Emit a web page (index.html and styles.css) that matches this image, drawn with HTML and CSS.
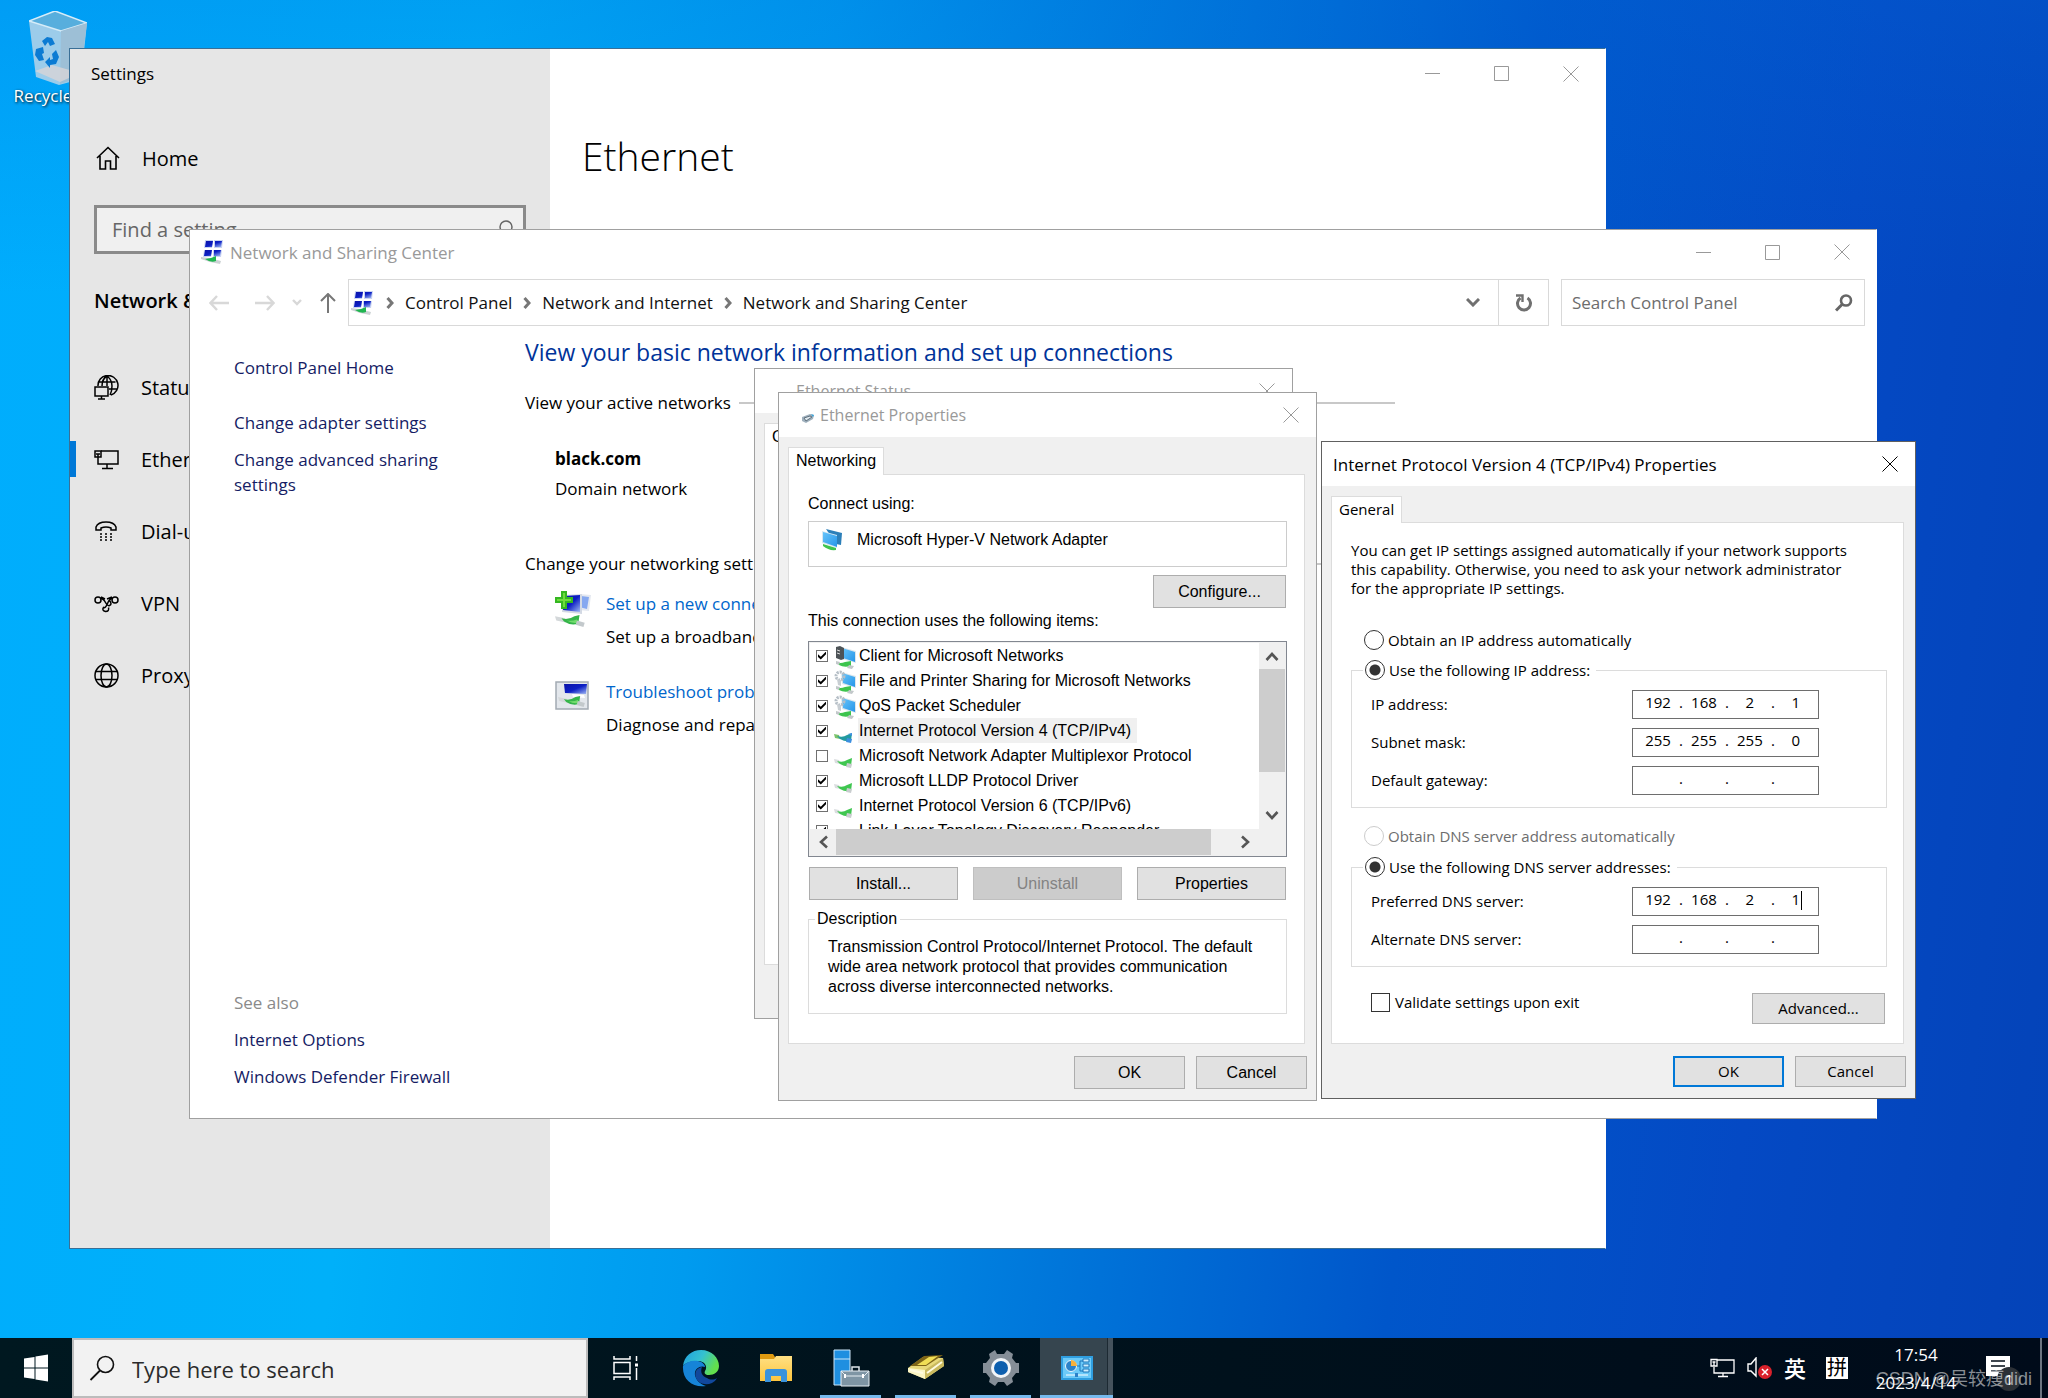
FILE: index.html
```html
<!DOCTYPE html>
<html lang="en">

<head>
    <meta charset="UTF-8" />
    <meta name="viewport" content="width=device-width, initial-scale=1.0"/>
    <title>Desktop</title>

    <link rel="stylesheet" href="styles.css">
</head>

<body>

    <!-- shared icons -->
    <svg class="defs" width="0" height="0" aria-hidden="true">
        <defs>
            <linearGradient id="gScreen" x1="0" y1="0" x2="1" y2="1">
                <stop offset="0" stop-color="#0a12a8"/>
                <stop offset="0.5" stop-color="#0c1fc4"/>
                <stop offset="1" stop-color="#9fb8f4"/>
            </linearGradient>
            <linearGradient id="gGlass" x1="0" y1="0" x2="1" y2="1">
                <stop offset="0" stop-color="#66c4fb"/>
                <stop offset="1" stop-color="#2796e8"/>
            </linearGradient>
            <linearGradient id="gEdge" x1="0" y1="0" x2="1" y2="0.4">
                <stop offset="0" stop-color="#1f9fe0"/>
                <stop offset="0.55" stop-color="#35c1d0"/>
                <stop offset="1" stop-color="#63e04c"/>
            </linearGradient>
            <linearGradient id="gFolder" x1="0" y1="0" x2="0" y2="1">
                <stop offset="0" stop-color="#ffe084"/>
                <stop offset="1" stop-color="#fdc53e"/>
            </linearGradient>
        </defs>
        <symbol id="minimize" viewBox="0 0 15 15"><path d="M0 7.500h15" stroke="currentColor"/></symbol>
        <symbol id="maximize" viewBox="0 0 15 15"><path d="M.5.5h14v14H.5z" fill="none" stroke="currentColor"/></symbol>
        <symbol id="close" viewBox="0 0 16 16"><path d="M.5.5l15 15M15.5.5l-15 15" stroke="currentColor"/></symbol>
        <symbol id="chevron" viewBox="0 0 8 12"><path d="M1.500 1l4.500 5-4.500 5" fill="none" stroke="currentColor" stroke-width="3"/></symbol>
        <symbol id="plug" viewBox="0 0 24 12">
            <path d="M0 2l8 2 1 4-8-2z" fill="#d4d8da"/>
            <path d="M5 4q5 2 10-2l4-1-1 8q-6 2-11-2z" fill="#35b54a"/>
            <path d="M9 6q4 1 8-1l1 3q-5 1-9-2z" fill="#72dc6c"/>
            <path d="M17 6l6 2-1 4-6-2z" fill="#c3c9cc"/>
        </symbol>
        <symbol id="netcenter" viewBox="0 0 24 24">
            <path d="M4 0h8L11 8H3zM13 0h9l-1 8h-8z" fill="#c9d4f2"/>
            <path d="M5 1h7l-1 6H4zM14 1h7l-1 6h-6z" fill="url(#gScreen)"/>
            <path d="M3 10h8l-1 7H2zM12 10h9l-1 7h-8z" fill="#c9d4f2"/>
            <path d="M4 10h7l-1 6H3zM13 10h7l-1 6h-6z" fill="url(#gScreen)"/>
            <path d="M0 17l8 1 12 3-1 3-10-2-9-3z" fill="#ccd2d4"/>
            <path d="M4 19l6-1 5-2v5q-5 2-11-2z" fill="#20b550"/>
        </symbol>
        <symbol id="netitem" viewBox="0 0 24 24">
            <path d="M7 2l15 4v12L8 14z" fill="#dce6ec"/>
            <path d="M8 3l13 4v10L9 13z" fill="url(#gGlass)"/>
            <path d="M3 17q3 2 8 0l6-1v5q-7 2-12-1z" fill="#3dc44e"/>
            <path d="M2 16l4 1-1 3-3-1zM15 20l5 1-2 3-5-1z" fill="#c2c8ca"/>
        </symbol>
        <symbol id="plugitem" viewBox="0 0 24 24">
            <path d="M0 14l5 1 1 4-5-1z" fill="#dadddf"/>
            <path d="M3 16q6 2 10-1l5-2-1 8q-6 1-11-2z" fill="#3fc650"/>
            <path d="M13 18l5 1-1 4-5-1z" fill="#c9cdcf"/>
        </symbol>
    </svg>

    <main class="desktop">

        <a class="desktop-icon" href="#">
            <svg width="58" height="74" viewBox="0 0 58 74">
                <path d="M0 10L26 0l32 12-6 56-22 6L7 66z" fill="#b7d4e8" opacity=".85"/>
                <path d="M0 10L26 0l32 12-26 8z" fill="#57aedd" stroke="#d6ecf8" stroke-width="1.500"/>
                <path d="M32 20l26-8-7 54-20 7z" fill="#9dbfd6"/>
                <path d="M6 60l17-6 28 8-20 9z" fill="#d8d5d7" opacity=".8"/>
                <path d="M13 30l5-4 5 1 3 6-5 2-2-4-3 4zM7 38l7-2 1 6-2 1 2 6-5 1-4-6zM27 39l3 7-3 7-6 1v3l-5-6 5-5v3l3-1-1-5z" fill="#0b7bd3"/>
            </svg>
            <span>Recycle Bin</span>
        </a>

        <!-- Settings -->
        <section class="window settings">
            <nav class="settings-nav">
                <div class="settings-title">Settings</div>
                <a class="settings-link home" href="#">
                    <svg width="24" height="24" viewBox="0 0 24 24"><path d="M1 12L12 1.500 23 12M4 10v13h5.500v-8h5v8H20V10" fill="none" stroke="#000" stroke-width="1.600"/></svg>
                    Home
                </a>
                <div class="settings-search">
                    <input type="text" placeholder="Find a setting" aria-label="Find a setting">
                    <svg width="20" height="20" viewBox="0 0 20 20"><circle cx="12" cy="7" r="6" fill="none" stroke="#666" stroke-width="1.500"/><path d="M8 12l-7 7" stroke="#666" stroke-width="1.500"/></svg>
                </div>
                <h2>Network &amp; Internet</h2>
                <a class="settings-link" href="#">
                    <svg width="25" height="25" viewBox="0 0 25 25" fill="none" stroke="#000" stroke-width="1.500"><path d="M4 11a10 10 0 1 1 13 9M8 11q0-7 5-10 5 4 5 10 0 5-2 9M4.500 7h17M15 14h8M13 1v10"/><path d="M1 12h13v9H1zM7.500 21v3M4 24h7"/></svg>
                    Status
                </a>
                <a class="settings-link active" href="#">
                    <svg width="25" height="25" viewBox="0 0 25 25" fill="none" stroke="#000" stroke-width="1.500"><path d="M7 4h17v13H4v-7M13 17v4M8 21.500h11"/><path d="M1 4h6v6H1zM2 7h4M4 7v3"/></svg>
                    Ethernet
                </a>
                <a class="settings-link" href="#">
                    <svg width="25" height="25" viewBox="0 0 25 25" fill="none" stroke="#000" stroke-width="1.500"><path d="M2 8q2-5 10-5t10 5v3h-5V9q-5-2-10 0v2H2z"/><path d="M6 15h2M11 15h2M16 15h2M6 18h2M11 18h2M16 18h2M6 21h2M11 21h2M16 21h2"/></svg>
                    Dial-up
                </a>
                <a class="settings-link" href="#">
                    <svg width="25" height="25" viewBox="0 0 25 25" fill="none" stroke="#000" stroke-width="1.500"><circle cx="4" cy="9" r="3"/><circle cx="21" cy="9" r="3"/><path d="M6.500 7.500q3 0 5 4t4 3q3-1 0-5M18.500 7.500q-3 0-5 5t-4 4q-2 3 2 4 4 0 3-4M7 6l4 2M18 6l-5 2"/></svg>
                    VPN
                </a>
                <a class="settings-link" href="#">
                    <svg width="25" height="25" viewBox="0 0 25 25" fill="none" stroke="#000" stroke-width="1.500"><circle cx="12.500" cy="12.500" r="11.500"/><ellipse cx="12.500" cy="12.500" rx="5.500" ry="11.500"/><path d="M2 8.500h21M2 16.500h21"/></svg>
                    Proxy
                </a>
            </nav>
            <div class="settings-main">
                <div class="captions">
                    <button aria-label="Minimize"><svg width="15" height="15"><use href="#minimize"/></svg></button>
                    <button aria-label="Maximize"><svg width="15" height="15"><use href="#maximize"/></svg></button>
                    <button aria-label="Close"><svg width="16" height="16"><use href="#close"/></svg></button>
                </div>
                <h1>Ethernet</h1>
            </div>
        </section>

        <!-- Network and Sharing Center -->
        <section class="window explorer">
            <header class="explorer-title">
                <svg width="24" height="24"><use href="#netcenter"/></svg>
                <span>Network and Sharing Center</span>
                <div class="captions">
                    <button aria-label="Minimize"><svg width="15" height="15"><use href="#minimize"/></svg></button>
                    <button aria-label="Maximize"><svg width="15" height="15"><use href="#maximize"/></svg></button>
                    <button aria-label="Close"><svg width="16" height="16"><use href="#close"/></svg></button>
                </div>
            </header>
            <div class="toolbar">
                <div class="history">
                    <button aria-label="Back" disabled><svg width="20" height="16" viewBox="0 0 20 16"><path d="M8 1L1.500 8 8 15M2 8h18" fill="none" stroke="currentColor" stroke-width="2.400"/></svg></button>
                    <button class="forward" aria-label="Forward" disabled><svg width="20" height="16" viewBox="0 0 20 16"><path d="M12 1l6.500 7-6.500 7M18 8H0" fill="none" stroke="currentColor" stroke-width="2.400"/></svg></button>
                    <button aria-label="Recent" disabled><svg width="10" height="7" viewBox="0 0 10 7"><path d="M1 1l4 4 4-4" fill="none" stroke="currentColor" stroke-width="2.400"/></svg></button>
                    <button class="up" aria-label="Up"><svg width="16" height="20" viewBox="0 0 16 20"><path d="M1 8l7-7 7 7M8 1.500V20" fill="none" stroke="currentColor" stroke-width="2"/></svg></button>
                </div>
                <div class="address">
                    <svg width="24" height="24"><use href="#netcenter"/></svg>
                    <svg class="sep" width="8" height="12"><use href="#chevron"/></svg>
                    <a href="#">Control Panel</a>
                    <svg class="sep" width="8" height="12"><use href="#chevron"/></svg>
                    <a href="#">Network and Internet</a>
                    <svg class="sep" width="8" height="12"><use href="#chevron"/></svg>
                    <a href="#">Network and Sharing Center</a>
                    <button class="drop" aria-label="Previous locations"><svg width="14" height="9" viewBox="0 0 14 9"><path d="M1 1l6 6 6-6" fill="none" stroke="currentColor" stroke-width="3"/></svg></button>
                    <button class="refresh" aria-label="Refresh"><svg width="18" height="18" viewBox="0 0 18 18"><path d="M12.500 4a6.500 6.500 0 1 1-7 0" fill="none" stroke="currentColor" stroke-width="3"/><path d="M1 1.500h6.500V8" fill="none" stroke="currentColor" stroke-width="2.400"/></svg></button>
                </div>
                <div class="panel-search">
                    <input type="text" placeholder="Search Control Panel" aria-label="Search Control Panel">
                    <svg width="18" height="18" viewBox="0 0 18 18"><circle cx="11" cy="6.500" r="5" fill="none" stroke="#666" stroke-width="2.600"/><path d="M7.500 10L1 16.500" stroke="#666" stroke-width="3"/></svg>
                </div>
            </div>
            <div class="explorer-body">
                <nav class="tasks">
                    <a class="panel-home" href="#">Control Panel Home</a>
                    <a href="#">Change adapter settings</a>
                    <a href="#">Change advanced sharing settings</a>
                    <span class="see-also">See also</span>
                    <a href="#">Internet Options</a>
                    <a href="#">Windows Defender Firewall</a>
                </nav>
                <div class="network-info">
                    <h1>View your basic network information and set up connections</h1>
                    <h2>View your active networks</h2>
                    <div class="active-network">
                        <strong>black.com</strong>
                        <span>Domain network</span>
                    </div>
                    <h2>Change your networking settings</h2>
                    <div class="action">
                        <svg width="36" height="36" viewBox="0 0 36 36">
                            <path d="M24 3l12 1-2 16-11-1z" fill="#e4e8f0"/><path d="M26 5l8 1-2 12-8-2z" fill="#86a8f0"/>
                            <path d="M8 4l19-1v20L7 21z" fill="#d3d9e4"/><path d="M9 5l16-1v17L8 19z" fill="url(#gScreen)"/>
                            <path d="M6 0h6v6h6v6h-6v6H6v-6H0V6h6z" fill="#35b721"/><path d="M8 2h2v6h6v2h-6v6H8v-6H2V8h6z" fill="#6fdc3e"/>
                            <svg x="0" y="23" width="31" height="13" viewBox="0 0 24 12" preserveAspectRatio="none"><use href="#plug" width="24" height="12"/></svg>
                        </svg>
                        <div>
                            <a href="#">Set up a new connection or network</a>
                            <p>Set up a broadband, dial-up, or VPN connection</p>
                        </div>
                    </div>
                    <div class="action">
                        <svg width="36" height="36" viewBox="0 0 36 36">
                            <path d="M1 3h32v27H1z" fill="#e3e7ec" stroke="#a3aab3" stroke-width="1.500"/>
                            <path d="M9 5h23l-1 10-21-1z" fill="url(#gScreen)"/>
                            <path d="M17 15l12 1 1 3-12-1z" fill="#fff"/>
                            <svg x="3" y="16" width="28" height="12" viewBox="0 0 24 12" preserveAspectRatio="none"><use href="#plug" width="24" height="12"/></svg>
                        </svg>
                        <div>
                            <a href="#">Troubleshoot problems</a>
                            <p>Diagnose and repair network problems</p>
                        </div>
                    </div>
                </div>
            </div>
        </section>

        <!-- Ethernet Status -->
        <section class="window dialog status">
            <header class="dialog-title">
                <svg width="14" height="11" viewBox="0 0 14 11"><path d="M1 8l8-4 4 2-8 5z" fill="#7d8c98"/></svg>
                <span>Ethernet Status</span>
                <button aria-label="Close"><svg width="16" height="16"><use href="#close"/></svg></button>
            </header>
            <div class="tabs"><button class="tab">General</button></div>
            <div class="page"></div>
        </section>

        <!-- Ethernet Properties -->
        <section class="window dialog properties">
            <header class="dialog-title">
                <svg width="14" height="11" viewBox="0 0 14 11"><path d="M1 4l8-3 4 1-1 4-7 4-4-2z" fill="#9fb0bd"/><path d="M3 5l6-2 2 1-6 4z" fill="#dfe9ef" stroke="#60707c"/><path d="M10 1l3 1-1 2z" fill="#38a5dd"/></svg>
                <span>Ethernet Properties</span>
                <button aria-label="Close"><svg width="16" height="16"><use href="#close"/></svg></button>
            </header>
            <div class="tabs"><button class="tab">Networking</button></div>
            <div class="page">
                <p>Connect using:</p>
                <div class="adapter">
                    <svg width="22" height="22" viewBox="0 0 22 22"><path d="M5 0l16 4-1 12-5-1z" fill="#2b7fb9"/><path d="M1 2l15 4v13L1 14z" fill="#d6e8f2"/><path d="M2 3l14 4v11L2 13z" fill="url(#gGlass)"/><path d="M2 15l13 4v2q-7 1-13-4z" fill="#3fc44f"/></svg>
                    Microsoft Hyper-V Network Adapter
                </div>
                <button class="btn configure">Configure...</button>
                <p>This connection uses the following items:</p>
                <div class="listbox">
                    <ul>
                        <li>
                            <input type="checkbox" id="item1" checked>
                            <svg width="24" height="24"><use href="#netitem"/><path d="M2 2l4-1 4 2v11l-3 1-5-2z" fill="#4d5357"/><path d="M3 5l3 1M3 8l3 1" stroke="#ddd"/></svg>
                            <label for="item1">Client for Microsoft Networks</label>
                        </li>
                        <li>
                            <input type="checkbox" id="item2" checked>
                            <svg width="24" height="24"><use href="#netitem"/><circle cx="6" cy="6" r="4" fill="none" stroke="#b5bec6" stroke-width="3" stroke-dasharray="2 1"/><path d="M3 9l4 1v6l-3-1z" fill="#c8ced3"/></svg>
                            <label for="item2">File and Printer Sharing for Microsoft Networks</label>
                        </li>
                        <li>
                            <input type="checkbox" id="item3" checked>
                            <svg width="24" height="24"><use href="#netitem"/><circle cx="6" cy="6" r="4" fill="none" stroke="#b5bec6" stroke-width="3" stroke-dasharray="2 1"/><path d="M3 9l4 1v6l-3-1z" fill="#c8ced3"/></svg>
                            <label for="item3">QoS Packet Scheduler</label>
                        </li>
                        <li class="selected">
                            <input type="checkbox" id="item4" checked>
                            <svg width="24" height="24" viewBox="0 0 24 24"><path d="M0 14l5 1 1 4-5-1z" fill="#7cc36a"/><path d="M3 16q6 2 10-1l5-2-1 8q-6 1-11-2z" fill="#239aa0"/><path d="M13 18l5 1-1 4-5-1zM14 14l4-1v3z" fill="#3d8fe0"/></svg>
                            <label for="item4">Internet Protocol Version 4 (TCP/IPv4)</label>
                        </li>
                        <li>
                            <input type="checkbox" id="item5">
                            <svg width="24" height="24"><use href="#plugitem"/></svg>
                            <label for="item5">Microsoft Network Adapter Multiplexor Protocol</label>
                        </li>
                        <li>
                            <input type="checkbox" id="item6" checked>
                            <svg width="24" height="24"><use href="#plugitem"/></svg>
                            <label for="item6">Microsoft LLDP Protocol Driver</label>
                        </li>
                        <li>
                            <input type="checkbox" id="item7" checked>
                            <svg width="24" height="24"><use href="#plugitem"/></svg>
                            <label for="item7">Internet Protocol Version 6 (TCP/IPv6)</label>
                        </li>
                        <li>
                            <input type="checkbox" id="item8" checked>
                            <svg width="24" height="24"><use href="#plugitem"/></svg>
                            <label for="item8">Link-Layer Topology Discovery Responder</label>
                        </li>
                    </ul>
                    <div class="scroll-v">
                        <button aria-label="Scroll up"><svg width="14" height="10" viewBox="0 0 14 10"><path d="M1.500 9L7 3l5.500 6" fill="none" stroke="#555" stroke-width="2.600"/></svg></button>
                        <div class="thumb"></div>
                        <button aria-label="Scroll down"><svg width="14" height="10" viewBox="0 0 14 10"><path d="M1.500 1L7 7l5.500-6" fill="none" stroke="#555" stroke-width="2.600"/></svg></button>
                    </div>
                    <div class="scroll-h">
                        <button aria-label="Scroll left"><svg width="10" height="14" viewBox="0 0 10 14"><path d="M9 1.500L3 7l6 5.500" fill="none" stroke="#555" stroke-width="2.600"/></svg></button>
                        <div class="thumb"></div>
                        <button aria-label="Scroll right"><svg width="10" height="14" viewBox="0 0 10 14"><path d="M1 1.500L7 7l-6 5.500" fill="none" stroke="#555" stroke-width="2.600"/></svg></button>
                    </div>
                </div>
                <div class="item-buttons">
                    <button class="btn">Install...</button>
                    <button class="btn" disabled>Uninstall</button>
                    <button class="btn">Properties</button>
                </div>
                <fieldset class="description">
                    <legend>Description</legend>
                    <p>Transmission Control Protocol/Internet Protocol. The default wide area network protocol that provides communication across diverse interconnected networks.</p>
                </fieldset>
            </div>
            <footer>
                <button class="btn">OK</button>
                <button class="btn">Cancel</button>
            </footer>
        </section>

        <!-- IPv4 Properties -->
        <section class="window dialog ipv4">
            <header class="dialog-title">
                <span>Internet Protocol Version 4 (TCP/IPv4) Properties</span>
                <button aria-label="Close"><svg width="16" height="16"><use href="#close"/></svg></button>
            </header>
            <div class="tabs"><button class="tab">General</button></div>
            <div class="page">
                <p class="intro">You can get IP settings assigned automatically if your network supports this capability. Otherwise, you need to ask your network administrator for the appropriate IP settings.</p>
                <label class="radio"><input type="radio" name="ip"> Obtain an IP address automatically</label>
                <fieldset>
                    <legend><label class="radio"><input type="radio" name="ip" checked> Use the following IP address:</label></legend>
                    <div class="field">
                        <label for="ip">IP address:</label>
                        <div class="octets"><input id="ip" value="192">.<input aria-label="IP octet 2" value="168">.<input aria-label="IP octet 3" value="2">.<input aria-label="IP octet 4" value="1"></div>
                    </div>
                    <div class="field">
                        <label for="mask">Subnet mask:</label>
                        <div class="octets"><input id="mask" value="255">.<input aria-label="Mask octet 2" value="255">.<input aria-label="Mask octet 3" value="255">.<input aria-label="Mask octet 4" value="0"></div>
                    </div>
                    <div class="field">
                        <label for="gateway">Default gateway:</label>
                        <div class="octets"><input id="gateway">.<input aria-label="Gateway octet 2">.<input aria-label="Gateway octet 3">.<input aria-label="Gateway octet 4"></div>
                    </div>
                </fieldset>
                <label class="radio dns-auto"><input type="radio" name="dns" disabled> Obtain DNS server address automatically</label>
                <fieldset>
                    <legend><label class="radio"><input type="radio" name="dns" checked> Use the following DNS server addresses:</label></legend>
                    <div class="field">
                        <label for="dns1">Preferred DNS server:</label>
                        <div class="octets focused"><input id="dns1" value="192">.<input aria-label="DNS octet 2" value="168">.<input aria-label="DNS octet 3" value="2">.<input aria-label="DNS octet 4" value="1"></div>
                    </div>
                    <div class="field">
                        <label for="dns2">Alternate DNS server:</label>
                        <div class="octets"><input id="dns2">.<input aria-label="Alternate DNS octet 2">.<input aria-label="Alternate DNS octet 3">.<input aria-label="Alternate DNS octet 4"></div>
                    </div>
                </fieldset>
                <div class="validate">
                    <label><input type="checkbox"> Validate settings upon exit</label>
                    <button class="btn">Advanced...</button>
                </div>
            </div>
            <footer>
                <button class="btn default">OK</button>
                <button class="btn">Cancel</button>
            </footer>
        </section>
    </main>

    <footer class="taskbar">
        <button class="start" aria-label="Start">
            <svg width="24" height="28" viewBox="0 0 24 28"><path d="M0 4.500l10.500-1.500v10.500H0zM11.500 2.500L24 .5v13H11.500zM0 14.500h10.500V25L0 23.500zM11.500 14.500H24v13l-12.500-2z" fill="#fff"/></svg>
        </button>
        <div class="taskbar-search">
            <svg width="26" height="26" viewBox="0 0 26 26"><circle cx="16.500" cy="9.500" r="8" fill="none" stroke="#111" stroke-width="1.600"/><path d="M11 15.500L1.500 25" stroke="#111" stroke-width="1.800"/></svg>
            <input type="text" placeholder="Type here to search" aria-label="Type here to search">
        </div>
        <button class="app" aria-label="Task View">
            <svg width="26" height="26" viewBox="0 0 26 26" fill="none" stroke="#fff" stroke-width="1.500"><path d="M1 1v3h16V1M1 25v-3h16v3M1 7.500h16v11H1zM23.500 1v5M23.500 13v12"/><path d="M22 8.500h3v3h-3z" fill="#fff" stroke="none"/></svg>
        </button>
        <button class="app" aria-label="Microsoft Edge">
            <svg width="38" height="38" viewBox="0 0 38 38">
                <path d="M1 17C2 7 10 1 19 1c11 0 18 8 18 16 0 6-5 9-10 9-4 0-5-2-4-4 3-4 0-10-7-10C9 12 3 14 1 17z" fill="url(#gEdge)"/>
                <path d="M1 17c3-4 9-6 15-5 5 1 7 4 7 6-5-2-11 2-10 8 1 5 5 9 11 11C11 39 0 31 1 17z" fill="#1684d8"/>
                <path d="M20 18c-6 1-8 6-6 11s9 8 16 5c2-1 4-3 5-5-3 2-7 2-10 0-5-2-7-6-5-11z" fill="#11489c"/>
            </svg>
        </button>
        <button class="app" aria-label="File Explorer">
            <svg width="34" height="30" viewBox="0 0 34 30">
                <path d="M1 1h13l2 3v6H1z" fill="#df9a10"/><path d="M1 6h14l2-3h16v25H1z" fill="url(#gFolder)"/>
                <path d="M6 29V19q0-3 3-3h16q3 0 3 3v10h-6v-6H12v6z" fill="#3b93dc"/>
            </svg>
        </button>
        <button class="app running" aria-label="Server Manager">
            <svg width="38" height="38" viewBox="0 0 38 38">
                <path d="M2 1h16v35H2z" fill="#1f8fe0" stroke="#cde6f8"/><path d="M2 10h16" stroke="#cde6f8"/>
                <path d="M20 22V18h7v4" fill="none" stroke="#dfe6ea" stroke-width="1.500"/>
                <path d="M9 22h28v15H9z" fill="#7e95a4" stroke="#e5edf2"/><path d="M9 22l5 5h18l5-5" fill="none" stroke="#e5edf2"/><path d="M13 25v4M31 25v4" stroke="#fff" stroke-width="2"/>
            </svg>
        </button>
        <button class="app running" aria-label="Network">
            <svg width="38" height="28" viewBox="0 0 38 28">
                <path d="M1 14L16 3l20 1 1 8-19 13L1 18z" fill="#e8d97a"/><path d="M3 12L17 2l19-1-17 11z" fill="#7d6417"/>
                <path d="M10 11L22 3l9-1-12 9z" fill="#f0de55"/><path d="M1 14l17 2v9L1 18z" fill="#fbf5c4"/><path d="M18 16L36 4l1 8-19 13z" fill="#c9b95e"/><path d="M3 16l13 3M20 19l15-11" stroke="#fffbe0" stroke-width="2"/>
            </svg>
        </button>
        <button class="app running" aria-label="Settings">
            <svg width="38" height="38" viewBox="0 0 38 38">
                <path d="M15 5l-2-4-6 4 1 4-4 5-3 0v10l3 0 4 5-1 4 6 4 3-4h6l3 4 6-4-1-4 4-5 3 0V14l-3 0-4-5 1-4-6-4-3 4z" fill="#858e97"/>
                <ellipse cx="19" cy="19" rx="10" ry="10" fill="#f2f5f8"/><circle cx="19" cy="19" r="7" fill="#0d5fae"/>
            </svg>
        </button>
        <button class="app current" aria-label="Control Panel">
            <svg width="32" height="24" viewBox="0 0 32 24">
                <path d="M1 1h30v22H1z" fill="#6ccaf8" stroke="#2f9ee0" stroke-width="2"/>
                <circle cx="10" cy="10" r="5.500" fill="#2c82c9" stroke="#eaf6fd"/><path d="M10 10V4a6 6 0 0 1 6 6z" fill="#f7b13c"/>
                <path d="M16 10h3V5h3M19 10v5h3" fill="none" stroke="#1d76ba"/><path d="M22 3h6v3h-6zM22 8h6v3h-6zM22 13h6v3h-6z" fill="#cdeefe" stroke="#1d76ba"/>
                <path d="M5 19h22" stroke="#fff"/><path d="M14 17h3v4h-3z" fill="#2c82c9"/>
            </svg>
        </button>
        <div class="tray">
            <svg width="25" height="20" viewBox="0 0 25 20" fill="none" stroke="#fff" stroke-width="1.300"><path d="M7 2h17v13H4V9M13 15v3M8 18.500h10"/><path d="M1 1.500h6V8H1zM2.500 4h3M4 4v4"/></svg>
            <svg width="25" height="22" viewBox="0 0 25 22"><path d="M1 7h3l5-6v18l-5-5H1z" fill="none" stroke="#fff" stroke-width="1.400"/><circle cx="18" cy="15" r="7" fill="#d9212b"/><path d="M15 12l6 6M21 12l-6 6" stroke="#fff" stroke-width="1.500"/></svg>
            <span class="lang">英</span>
            <span class="ime">拼</span>
            <div class="clock"><span>17:54</span><span>2023/4/14</span></div>
            <div class="notice">
                <svg width="26" height="26" viewBox="0 0 26 26"><path d="M1 1h24v20h-8l-5 5v-5H1z" fill="#fff"/><path d="M6 6h14M6 11h14M6 16h14" stroke="#000b16" stroke-width="1.500"/></svg>
                <span class="badge">1</span>
            </div>
            <button class="show-desktop" aria-label="Show desktop"></button>
        </div>
        <span class="watermark">CSDN @吴较瘦didi</span>
    </footer>

</body>

</html>
```

FILE: styles.css
```css
:root {
    --ui: "Open Sans", "Noto Sans", "Noto Sans CJK SC", sans-serif;
    --arial: "Liberation Sans", Arial, sans-serif;
    --face: #f0f0f0;
    --line: #dcdcdc;
    --muted: #999;
    --link: #151c64;
    --accent: #0078d7;
}

* {
    box-sizing: border-box;
}

body {
    margin: 0;
    height: 100vh;
    display: flex;
    flex-direction: column;
    overflow: hidden;
    font-family: var(--ui);
    font-size: 17px;
    line-height: 25px;
    color: #000;
}

.defs {
    position: absolute;
}

h1,
h2,
p,
ul,
fieldset {
    margin: 0;
    padding: 0;
    font-weight: normal;
}

a {
    color: inherit;
    text-decoration: none;
}

button,
input {
    font: inherit;
    color: inherit;
    margin: 0;
    padding: 0;
    border: none;
    border-radius: 0;
    background: none;
    outline: none;
}

svg {
    flex: none;
    display: block;
}

.desktop {
    flex: 1;
    position: relative;
    overflow: hidden;
    background:
        linear-gradient(180deg, rgba(0, 110, 220, 0.25), rgba(0, 110, 220, 0) 22%),
        linear-gradient(97deg, #00adfd 0%, #00b0f9 22%, #009bef 38%, #0078db 54%, #0056ca 70%, #0449c4 85%, #0443b8 100%);
}

.desktop-icon {
    position: absolute;
    left: 12px;
    top: 11px;
    width: 92px;
    display: flex;
    flex-direction: column;
    align-items: center;
    line-height: 22px;
    color: #fff;
    white-space: nowrap;
    text-shadow: 1px 1px 3px #000;
}

/* windows */

.window {
    position: absolute;
    isolation: isolate;
    display: flex;
    border: 1px solid #a0a0a0;
    background: #fff;
}

.captions {
    display: flex;
    margin-left: auto;
    height: 100%;
    color: var(--muted);
}

.captions button {
    width: 69px;
    height: 100%;
    display: grid;
    place-items: center;
}

/* settings */

.settings {
    left: 69px;
    top: 48px;
    width: 1537px;
    height: 1201px;
    border-color: #3a6f96;
    border-right-color: #fff;
}

.settings-nav {
    width: 480px;
    background: #e6e6e6;
    font-size: 20px;
}

.settings-title {
    padding-left: 21px;
    height: 50px;
    line-height: 50px;
    font-size: 17px;
}

.settings-link {
    position: relative;
    display: flex;
    align-items: center;
    gap: 22px;
    height: 72px;
    padding-left: 24px;
}

.settings-link.home {
    height: 48px;
    margin-top: 35px;
    padding-left: 26px;
}

.settings-link.active::before {
    content: "";
    position: absolute;
    left: 0;
    top: 18px;
    width: 6px;
    height: 36px;
    background: var(--accent);
}

.settings-search {
    display: flex;
    align-items: center;
    margin: 23px 24px 33px;
    height: 49px;
    padding: 0 9px 0 15px;
    border: 3px solid #8a8a8a;
    background: #f0f0f0;
}

.settings-search input {
    flex: 1;
}

.settings-search input::placeholder {
    color: #666;
    opacity: 1;
}

.settings-nav h2 {
    padding-left: 24px;
    margin-bottom: 36px;
    font-size: 20px;
    line-height: 28px;
    font-weight: 600;
}

.settings-main {
    flex: 1;
}

.settings-main .captions {
    height: 49px;
    justify-content: flex-end;
}

.settings-main h1 {
    margin: 33px 0 0 32px;
    font-size: 39px;
    line-height: 50px;
    font-weight: 300;
}

/* control panel */

.explorer {
    left: 189px;
    top: 229px;
    width: 1688px;
    height: 890px;
    flex-direction: column;
    border-right-color: #fff;
}

.explorer-title {
    display: flex;
    align-items: center;
    gap: 5px;
    height: 44px;
    padding-left: 11px;
    color: var(--muted);
}

.toolbar {
    display: flex;
    gap: 12px;
    padding: 5px 11px 0 19px;
}

.history {
    display: flex;
    align-items: center;
    justify-content: space-between;
    width: 127px;
    color: #d8d8d8;
}

.history .forward {
    margin-left: 8px;
}

.history .up {
    color: #777;
}

.address,
.panel-search {
    display: flex;
    align-items: center;
    height: 47px;
    border: 1px solid #d9d9d9;
}

.address {
    flex: 1;
    padding-left: 2px;
    color: #111;
}

.address .sep {
    margin: 0 11px;
    color: #777;
}

.address button {
    height: 100%;
    display: grid;
    place-items: center;
    width: 50px;
    color: #707070;
}

.address .drop {
    margin-left: auto;
}

.address .refresh {
    border-left: 1px solid #d9d9d9;
}

.panel-search {
    width: 304px;
    padding: 0 11px 0 10px;
}

.panel-search input {
    flex: 1;
    min-width: 0;
}

.panel-search input::placeholder {
    color: #6d6d6d;
    opacity: 1;
}

.explorer-body {
    flex: 1;
    display: grid;
    grid-template-columns: 335px 1fr;
}

.tasks {
    display: flex;
    flex-direction: column;
    gap: 12px;
    padding: 29px 60px 29px 44px;
    color: var(--link);
}

.panel-home {
    margin-bottom: 18px;
}

.see-also {
    margin-top: auto;
    color: #8a8a8a;
}

.network-info {
    width: 870px;
    padding-top: 11px;
}

.network-info h1 {
    font-size: 23px;
    line-height: 30px;
    color: #003399;
    margin-bottom: 23px;
}

.network-info h2 {
    display: flex;
    align-items: center;
    gap: 8px;
    font-size: 17px;
    line-height: 25px;
}

.network-info h2::after {
    content: "";
    flex: 1;
    height: 2px;
    background: #c8c8c8;
}

.active-network {
    display: flex;
    flex-direction: column;
    gap: 5px;
    padding: 31px 0 50px 30px;
}

.action {
    display: flex;
    gap: 15px;
    margin: 15px 0 30px 30px;
}

.action a {
    color: #0066cc;
}

.action p {
    margin-top: 8px;
}

/* dialogs */

.dialog {
    flex-direction: column;
    background: var(--face);
    font-family: var(--arial);
    font-size: 16px;
    line-height: 20px;
}

.dialog-title {
    display: flex;
    align-items: center;
    gap: 5px;
    height: 44px;
    padding: 0 17px 0 22px;
    background: #fff;
    color: var(--muted);
    font-family: var(--ui);
}

.dialog-title svg {
    margin-top: 6px;
}

.dialog-title button {
    margin-left: auto;
}

.dialog-title button svg {
    margin: 0;
}

.tabs {
    display: flex;
    padding: 10px 9px 0;
}

.tab {
    height: 28px;
    margin-bottom: -1px;
    padding: 0 7px 2px;
    border: 1px solid var(--line);
    border-bottom: none;
    background: #fff;
    z-index: 1;
}

.page {
    display: flex;
    flex-direction: column;
    margin: 0 11px 0 9px;
    padding: 19px 17px 29px 19px;
    border: 1px solid var(--line);
    background: #fff;
}

.dialog footer {
    display: flex;
    justify-content: flex-end;
    gap: 11px;
    padding: 12px 9px 11px;
}

.btn {
    height: 33px;
    width: 133px;
    border: 1px solid #adadad;
    background: #e1e1e1;
}

.btn:disabled {
    background: #ccc;
    border-color: #bfbfbf;
    color: #838383;
}

.btn.default {
    border: 2px solid var(--accent);
}

.dialog footer .btn {
    width: 111px;
}

.dialog fieldset {
    border: 1px solid var(--line);
}

.status {
    left: 754px;
    top: 368px;
    width: 539px;
    height: 651px;
}

.status .page {
    height: 515px;
}

.properties {
    left: 778px;
    top: 392px;
    width: 539px;
}

.adapter {
    display: flex;
    align-items: center;
    gap: 14px;
    height: 46px;
    margin: 7px 0 8px;
    padding: 0 12px 8px;
    border: 1px solid #ccc;
}

.configure {
    align-self: flex-end;
    margin: 0 1px 3px;
}

.listbox {
    display: grid;
    grid-template-columns: 1fr 26px;
    grid-template-rows: 186px 26px;
    margin: 10px 0;
    padding: 1px;
    border: 1px solid #828790;
    background: var(--face);
}

.listbox ul {
    overflow: hidden;
    list-style: none;
    background: #fff;
}

.listbox li {
    display: flex;
    align-items: center;
    height: 25px;
    padding-left: 6px;
}

.listbox li svg {
    margin: 2px 0 0 6px;
}

.listbox label {
    padding: 0 6px 0 1px;
    line-height: 25px;
    white-space: nowrap;
}

.selected label {
    background: var(--face);
}

input[type="checkbox"] {
    appearance: none;
    flex: none;
    display: grid;
    place-items: center;
    width: 12px;
    height: 12px;
    border: 1px solid #707070;
    background: #fff;
}

input[type="checkbox"]:checked::before {
    content: "";
    width: 8px;
    height: 8px;
    background: #000;
    clip-path: polygon(0 35%, 35% 65%, 100% 0, 100% 35%, 35% 100%, 0 70%);
}

.scroll-v {
    display: flex;
    flex-direction: column;
}

.scroll-h {
    display: flex;
}

.scroll-v button,
.scroll-h button {
    display: grid;
    place-items: center;
    width: 26px;
    height: 26px;
}

.scroll-v .thumb {
    height: 103px;
    margin-bottom: auto;
    background: #cdcdcd;
}

.scroll-h .thumb {
    width: 375px;
    margin-right: auto;
    background: #cdcdcd;
}

.item-buttons {
    display: grid;
    grid-template-columns: repeat(3, 1fr);
    gap: 15px;
    margin: 0 1px 9px;
}

.item-buttons .btn {
    width: auto;
}

.description {
    padding: 0 19px 16px;
}

.description legend {
    margin-left: -13px;
    padding: 0 3px 0 2px;
}

.description p {
    margin-top: 8px;
}

.ipv4 {
    left: 1321px;
    top: 441px;
    width: 595px;
    border-color: #606060;
    font-family: "Open Sans", "Noto Sans", sans-serif;
    font-size: 15px;
    line-height: 19px;
}

.ipv4 .dialog-title {
    padding-left: 11px;
    color: #000;
    font-size: 17px;
}

.ipv4 .tab {
    height: 27px;
}

.ipv4 .page {
    padding: 18px 16px 19px 19px;
}

.ipv4 .btn {
    height: 31px;
}

.intro {
    margin-bottom: 30px;
    padding-right: 30px;
}

.radio {
    display: flex;
    align-items: center;
    gap: 4px;
    height: 24px;
}

.page > .radio {
    padding-left: 13px;
    margin-bottom: 6px;
}

input[type="radio"] {
    appearance: none;
    width: 20px;
    height: 20px;
    border: 1px solid #333;
    border-radius: 50%;
    background: #fff;
}

input[type="radio"]:checked {
    background: radial-gradient(circle, #333 5px, #fff 6px);
}

.page > .dns-auto {
    margin: 16px 0 7px;
    color: #6d6d6d;
}

.dns-auto input {
    border-color: #ccc;
}

.ipv4 fieldset {
    display: flex;
    flex-direction: column;
    gap: 9px;
    padding: 8px 67px 12px 19px;
}

.ipv4 legend {
    margin-left: -8px;
    padding-right: 6px;
}

.field {
    display: flex;
    align-items: center;
    justify-content: space-between;
}

.octets {
    position: relative;
    display: flex;
    width: 187px;
    height: 29px;
    padding: 0 0 4px 4px;
    border: 1px solid #6e6e6e;
    align-items: center;
}

.octets input {
    width: 42px;
    height: 19px;
    text-align: center;
}

.octets.focused::after {
    content: "";
    position: absolute;
    left: 168px;
    top: 3px;
    width: 1px;
    height: 19px;
    background: #000;
}

.validate {
    display: flex;
    align-items: flex-start;
    justify-content: space-between;
    margin-top: 26px;
    padding: 0 2px 0 20px;
}

.validate label {
    display: flex;
    align-items: center;
    gap: 5px;
}

.validate input[type="checkbox"] {
    width: 19px;
    height: 19px;
    border-color: #333;
}

/* taskbar */

.taskbar {
    position: relative;
    display: flex;
    height: 60px;
    background: linear-gradient(90deg, #001820, #00111c 60%, #000b1a);
    color: #fff;
}

.start {
    width: 72px;
    display: grid;
    place-items: center;
}

.taskbar-search {
    display: flex;
    align-items: center;
    gap: 17px;
    width: 516px;
    padding-left: 15px;
    border: 2px solid #bcbcbc;
    background: #f2f2f2;
    font-size: 22px;
}

.taskbar-search input {
    flex: 1;
    height: 100%;
    padding-top: 2px;
}

.taskbar-search input::placeholder {
    color: #2b2b2b;
    opacity: 1;
}

.app {
    width: 75px;
    display: grid;
    place-items: center;
}

.app.running {
    background: linear-gradient(#76b9ed, #76b9ed) center bottom / 61px 3px no-repeat;
}

.app.current {
    margin-left: 2px;
    width: 73px;
    background:
        linear-gradient(#76b9ed, #76b9ed) center bottom / 100% 3px no-repeat,
        linear-gradient(90deg, #36454f 67px, #1d2a33 67px, #1d2a33 68px, #45525c 68px);
}

.tray {
    display: flex;
    align-items: center;
    gap: 12px;
    margin-left: auto;
}

.lang {
    font-size: 22px;
    font-weight: 500;
}

.ime {
    margin: 0 14px 0 8px;
    width: 22px;
    height: 22px;
    line-height: 22px;
    font-size: 20px;
    text-align: center;
    color: #000;
    background: #fff;
}

.clock {
    display: flex;
    flex-direction: column;
    align-items: center;
    gap: 3px;
    width: 84px;
}

.notice {
    position: relative;
    margin: 0 17px 0 15px;
}

.badge {
    position: absolute;
    left: 12px;
    top: 12px;
    width: 24px;
    height: 24px;
    border-radius: 50%;
    line-height: 24px;
    text-align: center;
    font-size: 15px;
    background: #2b3036;
}

.show-desktop {
    width: 8px;
    height: 100%;
    border-left: 2px solid #6b7480;
}

.watermark {
    position: absolute;
    right: 16px;
    top: 29px;
    font-size: 18px;
    font-family: "Liberation Sans", "Noto Sans CJK SC", sans-serif;
    color: rgba(255, 255, 255, 0.55);
}
```
